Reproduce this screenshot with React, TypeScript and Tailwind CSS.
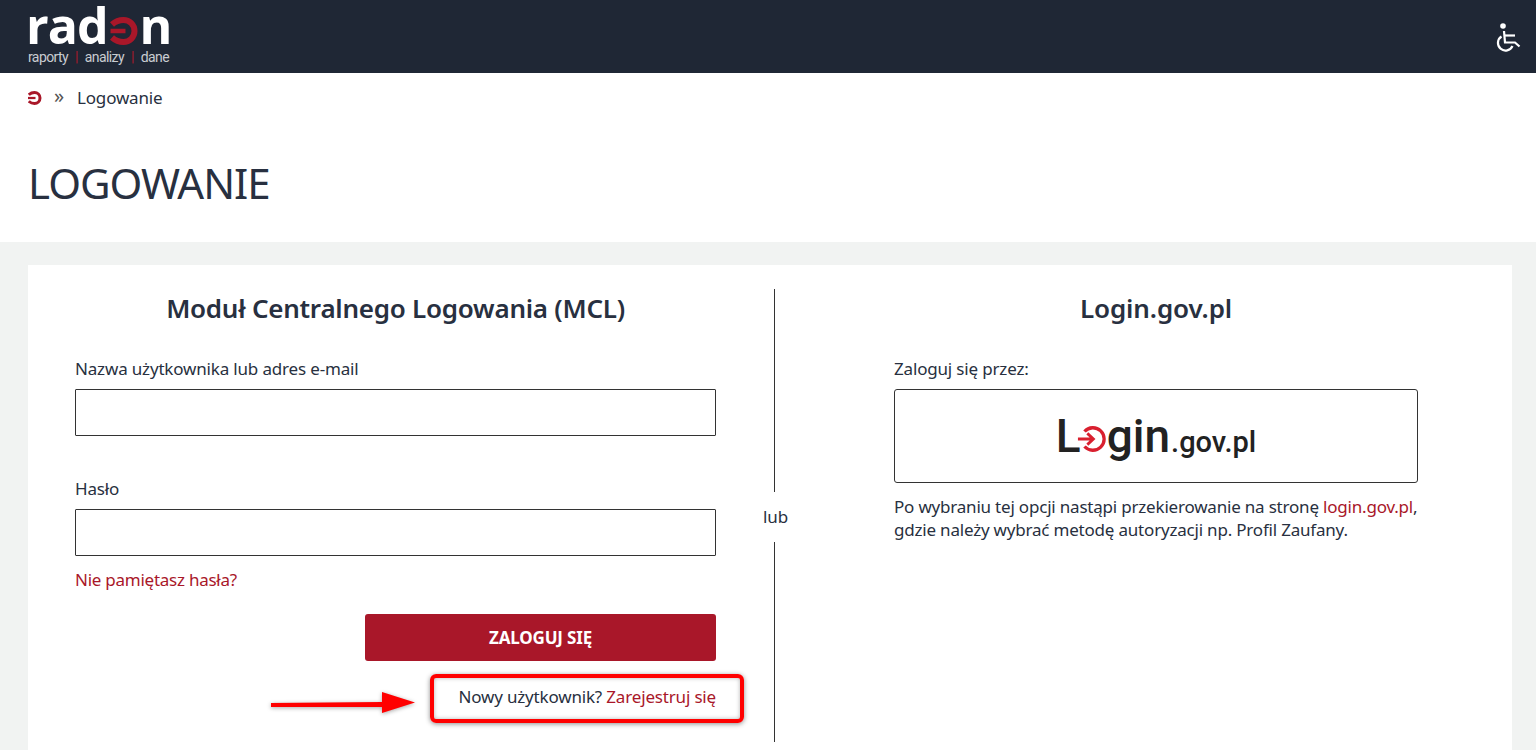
function PlugMark({ className }: { className: string }) {
  return (
    <svg viewBox="0 0 28 28" className={className} fill="none">
      <path d="M1.5 7.5 Q6.5 3 13 3 A11 11 0 0 1 13 25 Q6.5 25 1.5 20.5" stroke="#a91729" strokeWidth="6" />
      <path d="M0 14 H15" stroke="#a91729" strokeWidth="4.5" />
    </svg>
  );
}

function WheelchairIcon() {
  return (
    <svg viewBox="0 0 28 32" className="w-[28px] h-[32px]" fill="none" stroke="white" strokeWidth="2.2">
      <circle cx="7" cy="5" r="2.8" fill="white" stroke="none" />
      <path d="M8 10 L9 21.5 H19 L23.5 25.5" />
      <path d="M8.5 14.5 H19" />
      <path d="M5.5 15.5 A7.6 7.6 0 1 0 16.5 25" />
    </svg>
  );
}

function Logo() {
  return (
    <div className="flex flex-col w-[165px] -mt-[5px]">
      <div className="flex items-start h-[46px] -ml-[2px] text-white font-['Open_Sans',sans-serif] font-bold text-[50px] leading-[46px] tracking-[-1px]">
        <span>rad</span>
        <PlugMark className="w-[29px] h-[28px] mt-[15px] ml-[2px] mr-[1px] shrink-0" />
        <span>n</span>
      </div>
      <div className="flex justify-between w-[141px] text-[14px] leading-[18px] text-[#c9ccd1] font-['Roboto',sans-serif] tracking-[-0.6px]">
        <span>raporty</span>
        <span className="text-[#a91729]">|</span>
        <span>analizy</span>
        <span className="text-[#a91729]">|</span>
        <span>dane</span>
      </div>
    </div>
  );
}

function LoginGovLogo() {
  return (
    <div className="flex items-baseline text-[#222] font-['Roboto',sans-serif] leading-none tracking-normal">
      <span className="text-[46px] font-medium">L</span>
      <svg viewBox="0 0 32 32" className="w-[30px] h-[30px] self-center mt-[5px] -ml-[4px]" fill="none">
        <path d="M8 8 A12 12 0 1 1 8 24" stroke="#d9202f" strokeWidth="3.5" />
        <path d="M1 16 H17 M11 10 L17.5 16 L11 22" stroke="#d9202f" strokeWidth="3" />
      </svg>
      <span className="text-[46px] font-medium">gin</span>
      <span className="text-[29px] font-medium ml-[1px]">.gov.pl</span>
    </div>
  );
}

export default function App() {
  return (
    <div className="h-screen overflow-hidden bg-white text-[#283040] text-[17px] leading-[24px] font-['Noto_Sans',sans-serif] tracking-[-0.17px]">
      <header className="h-[73px] bg-[#1f2735] flex items-center justify-between pl-[28px] pr-[12px]">
        <Logo />
        <WheelchairIcon />
      </header>

      <nav className="h-[49px] pl-[28px] flex items-center gap-[12px]">
        <PlugMark className="w-[14px] h-[14px]" />
        <span className="text-[#555] text-[20px] leading-none -mt-[4px]">»</span>
        <span className="ml-[1px]">Logowanie</span>
      </nav>

      <h1 className="pl-[28px] pt-[31px] h-[120px] text-[42px] leading-[60px] font-normal tracking-[-1px]">LOGOWANIE</h1>

      <section className="bg-[#f1f3f2] pt-[23px] px-[28px] h-[508px]">
        <div className="bg-white w-[1484px] h-[600px] flex pt-[24px]">
          <div className="w-[746px] pl-[47px] pr-[58px]">
            <h2 className="text-[26px] leading-[40px] font-semibold text-center tracking-[-0.25px] -mt-[1px]">Moduł Centralnego Logowania (MCL)</h2>
            <label className="block mt-[29px]">Nazwa użytkownika lub adres e-mail</label>
            <input className="block mt-[8px] w-full h-[47px] border border-[#333] rounded-[1px]" />
            <label className="block mt-[41px]">Hasło</label>
            <input className="block mt-[8px] w-full h-[47px] border border-[#333] rounded-[1px]" />
            <a className="block mt-[12px] text-[#a91729] tracking-[-0.25px]">Nie pamiętasz hasła?</a>
            <div className="flex justify-end mt-[22px]">
              <button className="w-[351px] h-[47px] bg-[#a91729] text-white rounded-[3px] font-bold">ZALOGUJ SIĘ</button>
            </div>
            <div className="relative mt-[24px] flex justify-end">
              <p>
                Nowy użytkownik? <a className="text-[#a91729]">Zarejestruj się</a>
              </p>
              <div className="absolute left-[355px] -top-[11px] w-[314px] h-[49px] border-[4px] border-[#ff0000] rounded-[6px] shadow-[0_1px_5px_rgba(0,0,0,0.45),inset_0_0_4px_rgba(0,0,0,0.3)]" />
              <svg viewBox="0 0 144 21" className="absolute left-[196px] top-[7px] w-[144px] h-[21px] drop-shadow-[0_1px_2px_rgba(0,0,0,0.35)]">
                <path d="M0 11 L111 10 V0 L144 10.5 L111 21 V15 L0 15 Z" fill="#ff0000" />
              </svg>
            </div>
          </div>

          <div className="relative w-px h-[453px] bg-[#333]">
            <span className="absolute left-[-17px] top-[203px] w-[37px] h-[50px] bg-white flex items-center justify-center">lub</span>
          </div>

          <div className="flex-1 pl-[119px] pr-[94px]">
            <h2 className="text-[26px] leading-[40px] font-semibold text-center tracking-[-0.1px] -mt-[1px]">Login.gov.pl</h2>
            <p className="mt-[29px]">Zaloguj się przez:</p>
            <div className="mt-[8px] h-[94px] border border-[#333] rounded-[3px] flex items-center justify-center">
              <LoginGovLogo />
            </div>
            <p className="mt-[12px] leading-[23px] tracking-[-0.2px] whitespace-nowrap">
              Po wybraniu tej opcji nastąpi przekierowanie na stronę <a className="text-[#a91729]">login.gov.pl</a>,
              <br />
              gdzie należy wybrać metodę autoryzacji np. Profil Zaufany.
            </p>
          </div>
        </div>
      </section>
    </div>
  );
}
